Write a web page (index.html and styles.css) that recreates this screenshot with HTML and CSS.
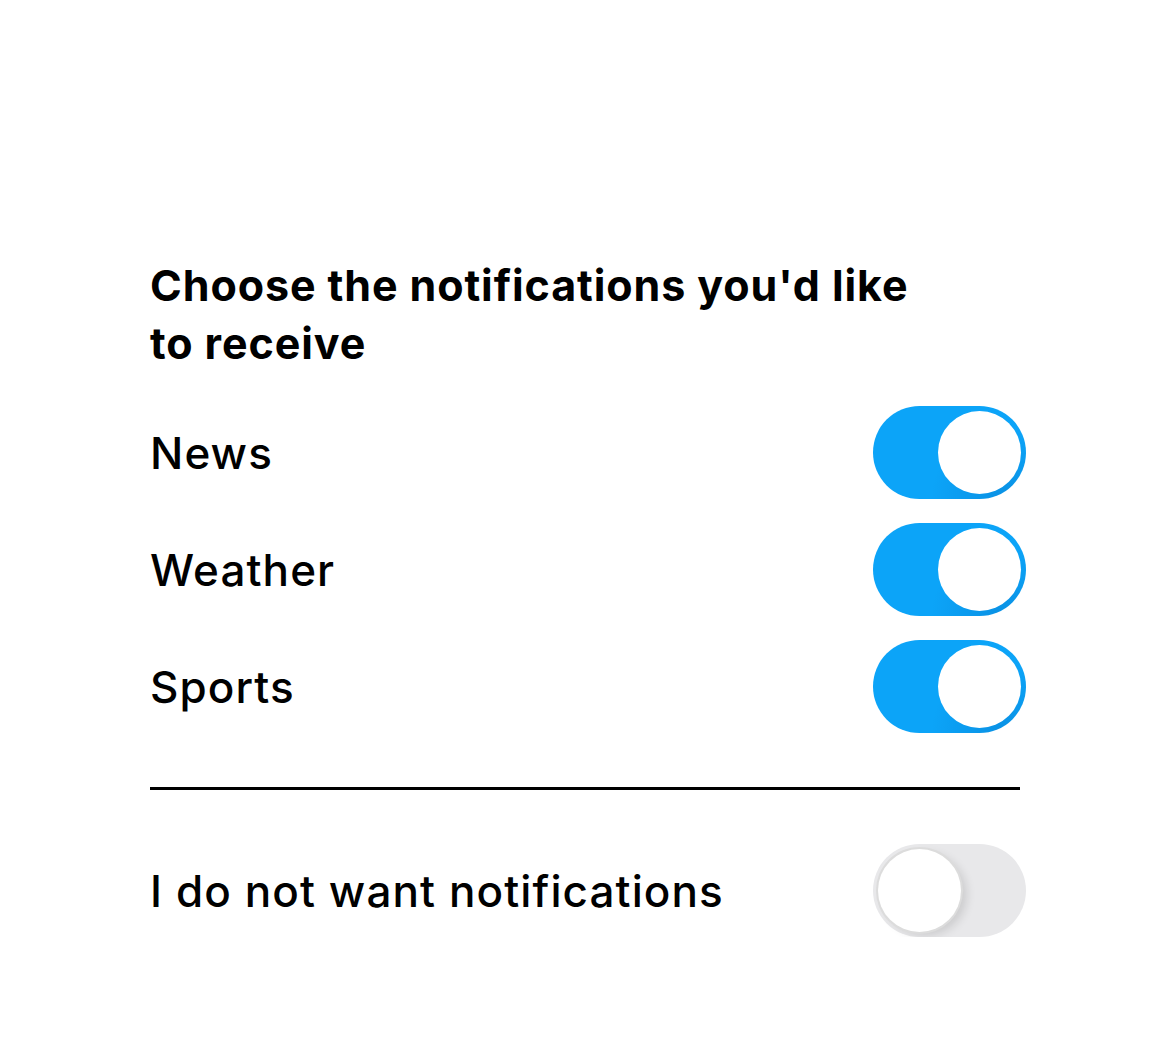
FILE: index.html
```html
<!DOCTYPE html>
<html>
<head>
<meta charset="utf-8">
<link rel="stylesheet" href="styles.css">
</head>
<body>
<main class="panel">
  <h1 class="title">Choose the notifications you'd like<br>to receive</h1>
  <ul class="list">
    <li class="row"><span class="label">News</span><span class="toggle on"><span class="knob"></span></span></li>
    <li class="row"><span class="label">Weather</span><span class="toggle on"><span class="knob"></span></span></li>
    <li class="row"><span class="label">Sports</span><span class="toggle on"><span class="knob"></span></span></li>
  </ul>
  <hr class="divider">
  <div class="row optout"><span class="label">I do not want notifications</span><span class="toggle off"><span class="knob"></span></span></div>
</main>
</body>
</html>
```
FILE: styles.css
```css
html, body { margin: 0; padding: 0; background: #fff; }
body { font-family: "Inter", "Liberation Sans", sans-serif; color: #000; }
.panel { width: 876px; padding: 256px 0 0 150px; }
.title { margin: 0 0 34px; font-size: 43px; line-height: 58px; font-weight: 700; letter-spacing: 0.9px; }
.list { list-style: none; margin: 0; padding: 0; display: flex; flex-direction: column; gap: 24px; }
.row { display: flex; align-items: center; justify-content: space-between; height: 93px; }
.label { font-size: 44px; font-weight: 500; letter-spacing: 1.1px; }
.toggle { position: relative; width: 153px; height: 93px; border-radius: 47px; box-sizing: border-box; display: block; }
.toggle .knob { position: absolute; top: 5px; width: 83px; height: 83px; border-radius: 50%; background: #fff; }
.toggle.on { background: #0ca4f8; background-image: radial-gradient(circle at 85% 100%, rgba(0,70,150,0.2), rgba(0,0,0,0) 45%); }
.toggle.on .knob { right: 5px; }
.toggle.off { background: #e8e8ea; }
.toggle.off .knob { left: 5px; box-shadow: 0 0 0 2px #dcdcdc, 6px 4px 10px rgba(0,0,0,0.12); }
.divider { width: 870px; margin: 54px 0 54px; border: 0; height: 3px; background: #000; }
```
